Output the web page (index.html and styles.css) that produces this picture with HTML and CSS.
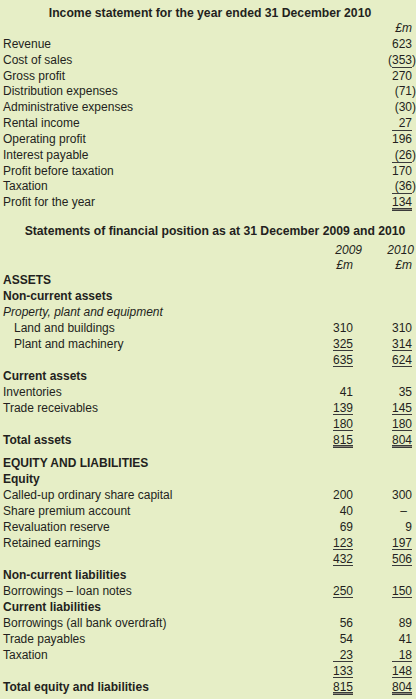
FILE: index.html
```html
<!DOCTYPE html>
<html>
<head>
<meta charset="utf-8">
<link rel="stylesheet" href="styles.css">
</head>
<body>
<div class="page">
  <h2 class="title t1">Income statement for the year ended 31 December 2010</h2>
  <div class="is">
    <span></span><span class="n it">£m</span>
    <span>Revenue</span><span class="n">623</span>
    <span>Cost of sales</span><span class="n u"><i class="po">(</i>353<i class="pc">)</i></span>
    <span>Gross profit</span><span class="n">270</span>
    <span>Distribution expenses</span><span class="n"><i class="po">(</i>71<i class="pc">)</i></span>
    <span>Administrative expenses</span><span class="n"><i class="po">(</i>30<i class="pc">)</i></span>
    <span>Rental income</span><span class="n u">27</span>
    <span>Operating profit</span><span class="n">196</span>
    <span>Interest payable</span><span class="n u"><i class="po">(</i>26<i class="pc">)</i></span>
    <span>Profit before taxation</span><span class="n">170</span>
    <span>Taxation</span><span class="n u"><i class="po">(</i>36<i class="pc">)</i></span>
    <span>Profit for the year</span><span class="n uu">134</span>
  </div>

  <h2 class="title t2">Statements of financial position as at 31 December 2009 and 2010</h2>
  <div class="bs head">
    <span></span><span class="n it y9">2009</span><span class="n it y10">2010</span>
    <span></span><span class="n it">£m</span><span class="n it">£m</span>
  </div>
  <div class="bs">
    <span class="b">ASSETS</span><span></span><span></span>
    <span class="b">Non-current assets</span><span></span><span></span>
    <span class="it">Property, plant and equipment</span><span></span><span></span>
    <span class="ind">Land and buildings</span><span class="n">310</span><span class="n">310</span>
    <span class="ind">Plant and machinery</span><span class="n u">325</span><span class="n u">314</span>
    <span></span><span class="n u">635</span><span class="n u">624</span>
    <span class="b">Current assets</span><span></span><span></span>
    <span>Inventories</span><span class="n">41</span><span class="n">35</span>
    <span>Trade receivables</span><span class="n u">139</span><span class="n u">145</span>
    <span></span><span class="n u">180</span><span class="n u">180</span>
    <span class="b">Total assets</span><span class="n uu">815</span><span class="n uu">804</span>
  </div>
  <div class="bs eq">
    <span class="b">EQUITY AND LIABILITIES</span><span></span><span></span>
    <span class="b">Equity</span><span></span><span></span>
    <span>Called-up ordinary share capital</span><span class="n">200</span><span class="n">300</span>
    <span>Share premium account</span><span class="n">40</span><span class="n"><span class="dash">–</span></span>
    <span>Revaluation reserve</span><span class="n">69</span><span class="n">9</span>
    <span>Retained earnings</span><span class="n u">123</span><span class="n u">197</span>
    <span></span><span class="n u">432</span><span class="n u">506</span>
    <span class="b">Non-current liabilities</span><span></span><span></span>
    <span>Borrowings – loan notes</span><span class="n u">250</span><span class="n u">150</span>
    <span class="b">Current liabilities</span><span></span><span></span>
    <span>Borrowings (all bank overdraft)</span><span class="n">56</span><span class="n">89</span>
    <span>Trade payables</span><span class="n">54</span><span class="n">41</span>
    <span>Taxation</span><span class="n u">23</span><span class="n u">18</span>
    <span></span><span class="n u">133</span><span class="n u">148</span>
    <span class="b">Total equity and liabilities</span><span class="n uu">815</span><span class="n uu">804</span>
  </div>
</div>
</body>
</html>
```

FILE: styles.css
```css
html, body {
  margin: 0;
  padding: 0;
  background: #e6eec6;
}
.page {
  width: 416px;
  height: 699px;
  box-sizing: border-box;
  padding: 5px 4px 0 3px;
  font-family: "Liberation Sans", Arial, sans-serif;
  font-size: 12px;
  color: #231f20;
  background: #e6eec6;
  overflow: hidden;
}
.title {
  margin: 0;
  font-size: 12.2px;
  font-weight: bold;
  text-align: center;
  line-height: 16px;
}
.t1 { padding-left: 5px; }
.t2 { margin-top: 12px; padding-left: 15px; }
.is {
  display: grid;
  grid-template-columns: 1fr 20px;
  grid-auto-rows: 15.85px;
  line-height: 15.85px;
}
.bs {
  display: grid;
  grid-template-columns: 1fr 20px 20px;
  column-gap: 39px;
  grid-auto-rows: 16px;
  line-height: 16px;
}
.bs.head { margin-top: 4px; grid-auto-rows: 14.5px; line-height: 15px; }
.eq { margin-top: 7px; }
.n {
  text-align: right;
  white-space: nowrap;
}
.it { font-style: italic; }
.b { font-weight: bold; }
.ind { padding-left: 11px; }
.y9 { margin-left: -20px; margin-right: -9px; }
.y10 { margin-left: -20px; margin-right: -2px; }
.po, .pc { font-style: normal; }
.po { margin-left: -4px; }
.pc { margin-right: -4px; }
.dash { margin-right: 5px; }
.u {
  background: linear-gradient(to top, transparent 0 1px, #3a3a3a 1px 2px, transparent 2px);
}
.uu {
  background: linear-gradient(to top, #3a3a3a 0 1px, #8a8a7a 1px 2px, #3a3a3a 2px 3px, transparent 3px);
}
```
